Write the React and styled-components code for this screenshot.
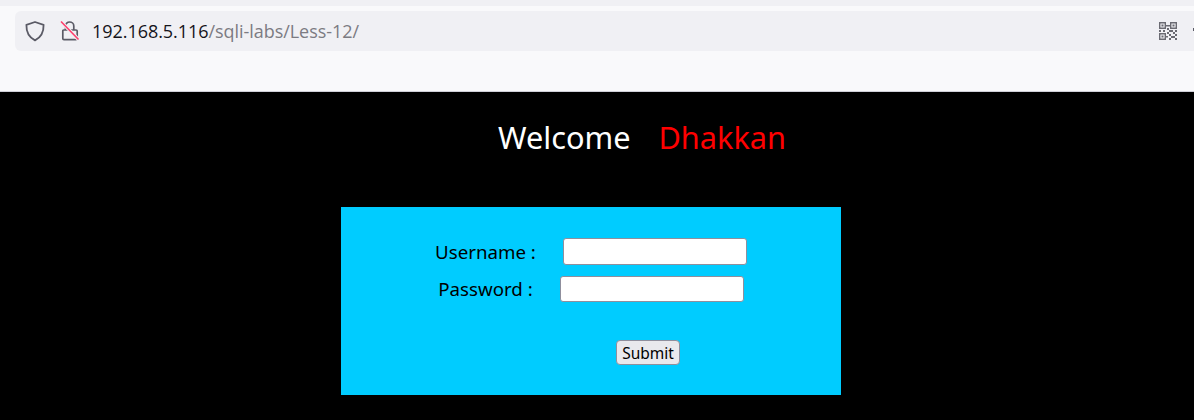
import React from 'react'
import styled, { createGlobalStyle } from 'styled-components'

const Global = createGlobalStyle`
  html, body { margin: 0; padding: 0; background: #000; }
  body { width: 1194px; height: 420px; overflow: hidden; font-family: "Noto Sans", "Open Sans", sans-serif; }
`

const Chrome = styled.div`
  height: 92px;
  box-sizing: border-box;
  background: #f9f9fb;
  border-top: 6px solid #f0f0f4;
  border-bottom: 1px solid #cfcfd8;
  padding: 5px 0 0 15px;
`

const UrlBar = styled.div`
  height: 40px;
  display: flex;
  align-items: center;
  background: #f0f0f4;
  border-radius: 6px 0 0 6px;
  padding-left: 9px;
  overflow: hidden;
`

const IconSlot = styled.span`
  display: flex;
  width: ${p => p.$w}px;
  flex: none;
`

const Url = styled.div`
  font-family: "Open Sans", sans-serif;
  font-size: 18px;
  letter-spacing: -0.05px;
  color: #15141a;
  flex: 1;
  span { color: #7c7b82; }
`

const QrSlot = styled.span`
  display: flex;
  flex: none;
  margin-right: 16px;
`

const Chevron = styled.span`
  flex: none;
  width: 1px;
  height: 3px;
  margin-top: -4px;
  background: #5b5b66;
`

const Page = styled.main`
  background: #000;
  height: 328px;
  display: flex;
  flex-direction: column;
`

const Title = styled.h1`
  margin: 0;
  padding: 24px 0 0 498px;
  height: 90px;
  box-sizing: border-box;
  font-size: 30.7px;
  line-height: 42px;
  font-weight: 400;
  color: #fff;
  display: flex;
  gap: 28px;
`

const Name = styled.span`
  color: #f00;
`

const Panel = styled.form`
  width: 500px;
  height: 188px;
  margin: 25px 0 0 341px;
  background: #00ccff;
  box-sizing: border-box;
  padding-top: 31px;
  display: flex;
  flex-direction: column;
  align-items: center;
`

const Row = styled.div`
  display: flex;
  align-items: center;
  gap: ${p => p.$gap}px;
  margin-bottom: 10px;
`

const Label = styled.label`
  font-size: 18.7px;
  color: #000;
  line-height: 27px;
`

const Field = styled.input`
  width: 184px;
  height: ${p => p.$h}px;
  box-sizing: border-box;
  background: #fff;
  border: 1px solid #8f8f9d;
  border-radius: 3px;
  padding: 0;
`

const Submit = styled.button`
  margin: 28px 0 0 114px;
  width: 64px;
  height: 25px;
  box-sizing: border-box;
  padding: 0;
  background: #e9e9ed;
  border: 1px solid #8f8f9d;
  border-radius: 4px;
  font-family: "Noto Sans", sans-serif;
  font-size: 15.5px;
  color: #000;
`

const Shield = () => (
  <svg width="22" height="22" viewBox="0 0 22 22" fill="none" stroke="#5b5b66" strokeWidth="1.8">
    <path d="M11 2 L19.6 4.8 C19.8 12 17 17.4 11 20.4 C5 17.4 2.2 12 2.4 4.8 Z" strokeLinejoin="round" />
  </svg>
)

const BrokenLock = () => (
  <svg width="20" height="22" viewBox="0 0 20 22" fill="none">
    <path d="M5.5 10 V6 C5.5 3.6 7.4 2 9.6 2 C11.8 2 13.8 3.6 13.8 6 V10" stroke="#5b5b66" strokeWidth="1.7" />
    <path d="M5 10 H3.8 C3 10 2.8 10.4 2.8 11 V18.4 C2.8 19.2 3.2 19.6 4 19.6 H15.8 C16.6 19.6 17.2 19.2 17.2 18.4 V11 C17.2 10.4 16.8 10 16 10 H5" stroke="#5b5b66" strokeWidth="1.7" />
    <path d="M1 1.5 L18.5 19.5" stroke="#f0f0f4" strokeWidth="3.4" />
    <path d="M1 1.5 L18.5 19.5" stroke="#ff3e6c" strokeWidth="1.6" />
  </svg>
)

const Qr = () => (
  <svg width="18" height="18" viewBox="0 0 18 18" fill="#6a6a72">
    <path fillRule="evenodd" d="M0 0h7v7H0zM1.4 1.4v4.2h4.2V1.4zM11 0h7v7h-7zM12.4 1.4v4.2h4.2V1.4zM0 11h7v7H0zM1.4 12.4v4.2h4.2v-4.2z" />
    <path d="M2.5 2.5h2v2h-2zM13.5 2.5h2v2h-2zM2.5 13.5h2v2h-2zM7 3h4v1.4H7zM7 14h2v1.4H7z" />
    <path d="M8 6h2v2H8zM12 8h2v2h-2zM16 8h2v2h-2zM8 10h2v2H8zM10 8h2v2h-2zM14 10h2v2h-2zM10 12h2v2h-2zM12 14h2v2h-2zM16 12h2v2h-2zM14 14h2v2h-2zM10 16h2v2h-2zM16 16h2v2h-2zM0 8h2v2H0zM4 8h2v2H4z" />
  </svg>
)

export default function App() {
  return (
    <>
      <Global />
      <Chrome>
        <UrlBar>
          <IconSlot $w={36}><Shield /></IconSlot>
          <IconSlot $w={32}><BrokenLock /></IconSlot>
          <Url>192.168.5.116<span>/sqli-labs/Less-12/</span></Url>
          <QrSlot><Qr /></QrSlot>
          <Chevron />
        </UrlBar>
      </Chrome>
      <Page>
        <Title>Welcome <Name>Dhakkan</Name></Title>
        <Panel onSubmit={e => e.preventDefault()}>
          <Row $gap={27}>
            <Label>Username :</Label>
            <Field $h={27} type="text" />
          </Row>
          <Row $gap={27}>
            <Label>Password :</Label>
            <Field $h={26} type="password" />
          </Row>
          <Submit type="submit">Submit</Submit>
        </Panel>
      </Page>
    </>
  )
}
